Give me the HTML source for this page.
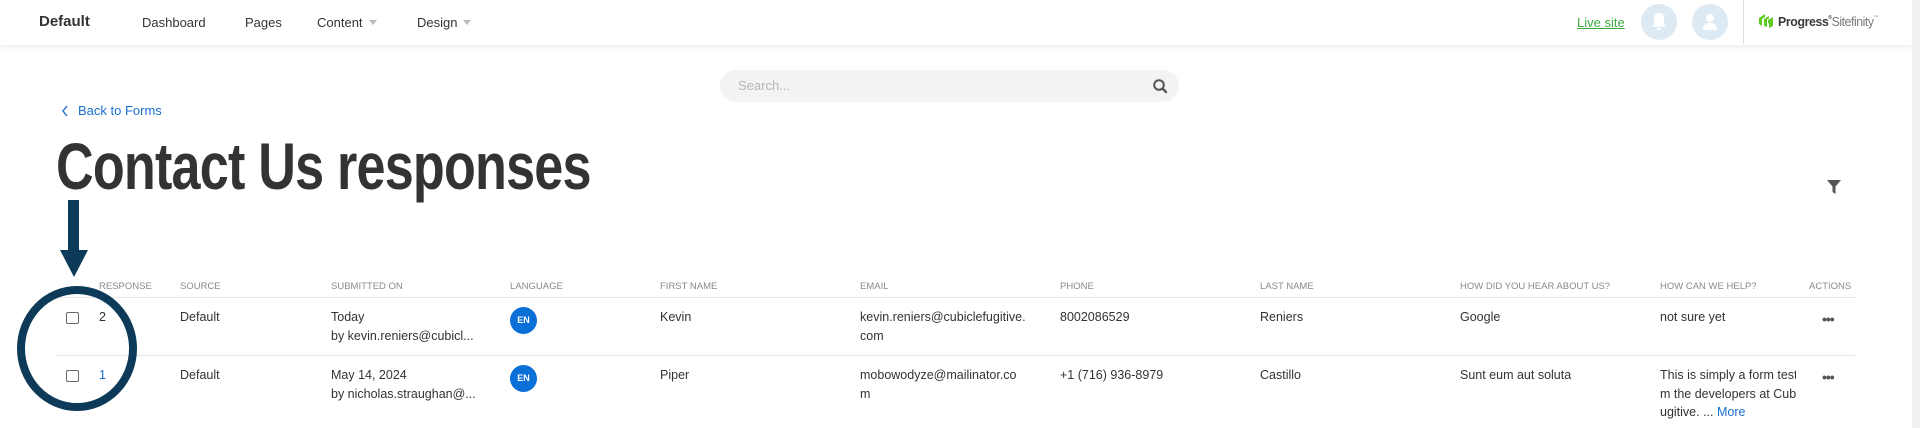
<!DOCTYPE html>
<html><head><meta charset="utf-8"><style>
*{margin:0;padding:0;box-sizing:border-box}
body{width:1920px;height:428px;overflow:hidden;background:#fff;font-family:"Liberation Sans",sans-serif;color:#333;position:relative}
.a{position:absolute;white-space:nowrap}
.nav{position:absolute;left:0;top:0;width:1912px;height:45px;background:#fff;box-shadow:0 2px 6px rgba(0,0,0,0.08)}
.n{font-size:13px;color:#333;top:15px}
.tri{display:inline-block;width:0;height:0;border-left:4px solid transparent;border-right:4px solid transparent;border-top:5px solid #bbb;margin-left:6px;vertical-align:2px}
.h{font-size:9.5px;color:#8a8a8a;top:281px;letter-spacing:0}
.c{font-size:12.5px;color:#333;line-height:18.5px}
.cb{position:absolute;width:13px;height:12px;border:1.3px solid #666;border-radius:2px;background:#fff}
.en{position:absolute;width:27px;height:27px;border-radius:50%;background:#0b6fd8;color:#fff;font-size:9px;font-weight:bold;text-align:center;line-height:27px}
.dots{position:absolute;font-size:14px;font-weight:bold;color:#555;letter-spacing:-1px}
</style></head><body>
<div class="nav"></div>
<div class="a" style="left:39px;top:13px;font-size:15px;font-weight:bold;color:#333">Default</div>
<div class="a n" style="left:142px">Dashboard</div>
<div class="a n" style="left:245px">Pages</div>
<div class="a n" style="left:317px">Content<span class="tri"></span></div>
<div class="a n" style="left:417px">Design<span class="tri"></span></div>
<div class="a" style="left:1577px;top:15px;font-size:13px;color:#3faa3f;text-decoration:underline">Live site</div>
<div class="a" style="left:1641px;top:4px;width:36px;height:36px;border-radius:50%;background:#dde9f3"></div>
<svg class="a" style="left:1649px;top:11px" width="20" height="22" viewBox="0 0 20 22"><path d="M10 2c-3.5 0-5 2.5-5 6v5l-2 3h14l-2-3V8c0-3.5-1.5-6-5-6z M8 17a2 2 0 0 0 4 0z" fill="#fff"/></svg>
<div class="a" style="left:1692px;top:4px;width:36px;height:36px;border-radius:50%;background:#dde9f3"></div>
<svg class="a" style="left:1700px;top:11px" width="20" height="22" viewBox="0 0 20 22"><circle cx="10" cy="7" r="4" fill="#fff"/><path d="M3 19c0-5 3-7 7-7s7 2 7 7z" fill="#fff"/></svg>
<div class="a" style="left:1743px;top:0;width:1px;height:44px;background:#ddd"></div>
<svg class="a" style="left:1759px;top:12px" width="15" height="16" viewBox="0 0 15 16"><path d="M0 6l6-4v3l-3 2v7l-3-2z M5 7l5-3v2 l-2 1.5V15l-3-1z M9 8l5 -3v9l-4 2V11l-1 .5z" fill="#5ecb23"/></svg>
<div class="a" style="left:1778px;top:14px;font-size:13px;font-weight:bold;color:#3a3a3a;letter-spacing:-0.4px;transform:scaleX(0.95);transform-origin:left">Progress<span style="font-size:5px;vertical-align:7px">®</span><span style="font-weight:normal;color:#7a7a7a;font-size:13px;letter-spacing:-0.5px">Sitefinity</span><span style="font-size:5px;color:#999;vertical-align:7px">™</span></div>
<div class="a" style="left:1912px;top:0;width:8px;height:428px;background:#f1f1f1"></div>

<div class="a" style="left:720px;top:70px;width:459px;height:32px;border-radius:16px;background:#f3f3f3"></div>
<div class="a" style="left:738px;top:78px;font-size:13px;color:#b5b5b5">Search...</div>
<svg class="a" style="left:1152px;top:78px" width="16" height="16" viewBox="0 0 16 16"><circle cx="7" cy="7" r="4.8" fill="none" stroke="#555" stroke-width="2"/><path d="M10.5 10.5l3.5 3.5" stroke="#555" stroke-width="2.4" stroke-linecap="round"/></svg>

<svg class="a" style="left:61px;top:105px" width="8" height="12" viewBox="0 0 8 12"><path d="M6 1L2 6l4 5" fill="none" stroke="#1a6fd0" stroke-width="1.4"/></svg>
<div class="a" style="left:78px;top:103px;font-size:13px;color:#1a6fd0">Back to Forms</div>
<div class="a" style="left:56px;top:128px;font-weight:bold;font-size:66px;color:#333;letter-spacing:-1px;transform:scaleX(0.79);transform-origin:left">Contact Us responses</div>
<svg class="a" style="left:1827px;top:180px" width="14" height="14" viewBox="0 0 14 14"><path d="M0 0h14L8.5 6.5V14L5.5 12V6.5z" fill="#555"/></svg>

<div class="a h" style="left:99px">RESPONSE</div>
<div class="a h" style="left:180px">SOURCE</div>
<div class="a h" style="left:331px">SUBMITTED ON</div>
<div class="a h" style="left:510px">LANGUAGE</div>
<div class="a h" style="left:660px">FIRST NAME</div>
<div class="a h" style="left:860px">EMAIL</div>
<div class="a h" style="left:1060px">PHONE</div>
<div class="a h" style="left:1260px">LAST NAME</div>
<div class="a h" style="left:1460px">HOW DID YOU HEAR ABOUT US?</div>
<div class="a h" style="left:1660px">HOW CAN WE HELP?</div>
<div class="a h" style="left:1809px">ACTIONS</div>
<div class="a" style="left:56px;top:297px;width:1799px;height:1px;background:#e6e6e6"></div>
<div class="a" style="left:56px;top:355px;width:1799px;height:1px;background:#e6e6e6"></div>

<div class="cb" style="left:66px;top:312px"></div>
<div class="a c" style="left:99px;top:308px">2</div>
<div class="a c" style="left:180px;top:308px">Default</div>
<div class="a c" style="left:331px;top:308px">Today<br>by kevin.reniers@cubicl...</div>
<div class="en" style="left:510px;top:307px">EN</div>
<div class="a c" style="left:660px;top:308px">Kevin</div>
<div class="a c" style="left:860px;top:308px">kevin.reniers@cubiclefugitive.<br>com</div>
<div class="a c" style="left:1060px;top:308px">8002086529</div>
<div class="a c" style="left:1260px;top:308px">Reniers</div>
<div class="a c" style="left:1460px;top:308px">Google</div>
<div class="a c" style="left:1660px;top:308px">not sure yet</div>
<div class="dots" style="left:1822px;top:311px">•••</div>

<div class="cb" style="left:66px;top:370px"></div>
<div class="a c" style="left:99px;top:366px;color:#1a6fd0">1</div>
<div class="a c" style="left:180px;top:366px">Default</div>
<div class="a c" style="left:331px;top:366px">May 14, 2024<br>by nicholas.straughan@...</div>
<div class="en" style="left:510px;top:365px">EN</div>
<div class="a c" style="left:660px;top:366px">Piper</div>
<div class="a c" style="left:860px;top:366px">mobowodyze@mailinator.co<br>m</div>
<div class="a c" style="left:1060px;top:366px">+1 (716) 936-8979</div>
<div class="a c" style="left:1260px;top:366px">Castillo</div>
<div class="a c" style="left:1460px;top:366px">Sunt eum aut soluta</div>
<div class="a c" style="left:1660px;top:366px;width:136px;overflow:hidden">This is simply a form test fro<br>m the developers at Cubiclef<br>ugitive. ... <span style="color:#1a6fd0">More</span></div>
<div class="dots" style="left:1822px;top:369px">•••</div>

<svg class="a" style="left:0;top:190px" width="160" height="238" viewBox="0 190 160 238">
<rect x="68" y="200" width="11" height="52" fill="#0e3a5a"/>
<path d="M60 250h28l-14 27z" fill="#0e3a5a"/>
<ellipse cx="77" cy="348.5" rx="56" ry="58.5" fill="none" stroke="#0e3a5a" stroke-width="8"/>
</svg>
</body></html>
